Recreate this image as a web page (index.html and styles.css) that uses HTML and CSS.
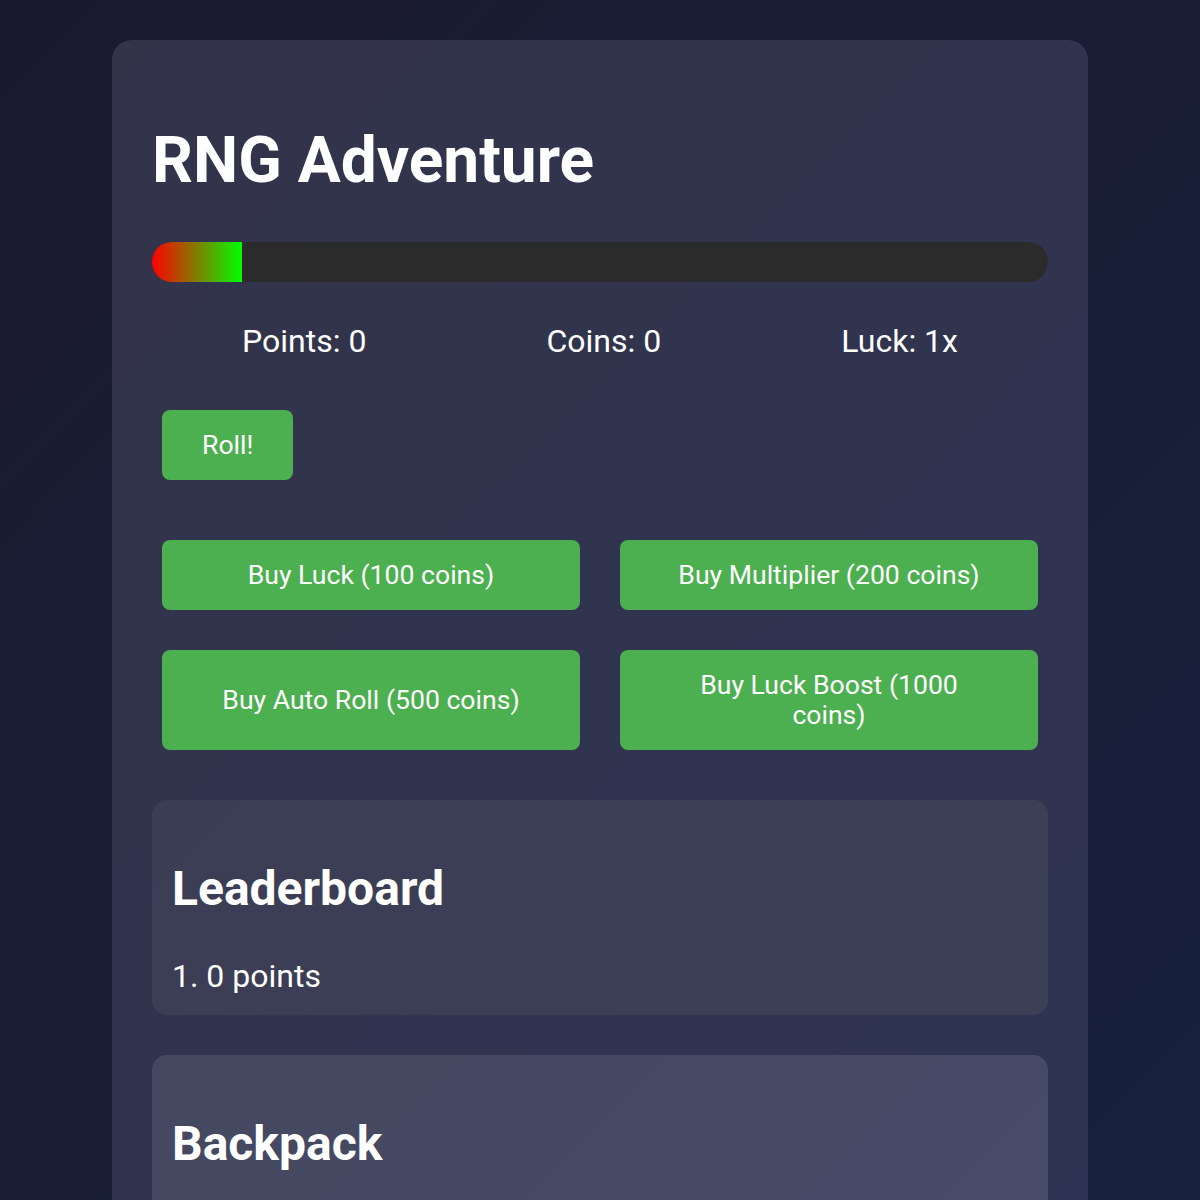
FILE: index.html
```html
<!DOCTYPE html>
<html lang="en">
<head>
    <meta charset="UTF-8">
    <meta name="viewport" content="width=device-width, initial-scale=1.0">
    <title>RNG Adventure</title>
    <link rel="stylesheet" href="styles.css">
</head>
<body>
    <div class="game">
        <h1>RNG Adventure</h1>

        <div class="progress">
            <div class="progress-fill" style="width: 10%"></div>
        </div>

        <div class="stats">
            <span id="points">Points: 0</span>
            <span id="coins">Coins: 0</span>
            <span id="luck">Luck: 1x</span>
        </div>

        <div class="actions">
            <button id="roll-button">Roll!</button>
        </div>

        <div class="shop">
            <button id="buy-luck">Buy Luck (100 coins)</button>
            <button id="buy-multiplier">Buy Multiplier (200 coins)</button>
            <button id="buy-auto">Buy Auto Roll (500 coins)</button>
            <button id="buy-boost">Buy Luck Boost (1000<br>coins)</button>
        </div>

        <div class="panel leaderboard">
            <h2>Leaderboard</h2>
            <div id="leaderboard-list">1. 0 points</div>
        </div>

        <div class="panel backpack">
            <h2>Backpack</h2>
            <div id="backpack-list"></div>
        </div>
    </div>
</body>
</html>
```
FILE: styles.css
```css
html {
    background: linear-gradient(135deg, #1a1a2e, #16213e);
    min-height: 100%;
}
body {
    font-family: Roboto, "Liberation Sans", sans-serif;
    font-size: 32px;
    color: #fff;
    margin: 0;
    padding: 40px 0;
}
.game {
    width: 896px;
    margin: 0 auto;
    padding: 40px;
    border-radius: 20px;
    background: linear-gradient(135deg, #33344a, #2e3454);
}
h1 {
    font-size: 64px;
    margin: 43px 0 44px;
}
.progress {
    height: 40px;
    border-radius: 20px;
    background-color: #2b2b2b;
    overflow: hidden;
}
.progress-fill {
    height: 100%;
    background: linear-gradient(90deg, #ff0000, #00ff00);
}
.stats {
    display: flex;
    justify-content: space-around;
    margin: 40px 0;
}
button {
    font-family: inherit;
    font-size: 26.6px;
    line-height: 30px;
    color: #fff;
    background-color: #4caf50;
    border: none;
    border-radius: 8px;
    padding: 20px 40px;
    margin: 10px;
    cursor: pointer;
}
.actions {
    display: flex;
}
.shop {
    display: grid;
    grid-template-columns: 1fr 1fr;
    gap: 20px;
    margin-top: 40px;
}
.panel {
    margin-top: 40px;
    padding: 20px;
    border-radius: 15px;
}
.panel h2 {
    font-size: 48px;
    margin: 40px 0;
}
.leaderboard {
    background: linear-gradient(135deg, #3b3d54, #3c4057);
}
.backpack {
    background: linear-gradient(135deg, #444860, #474b68);
    min-height: 300px;
}
```
